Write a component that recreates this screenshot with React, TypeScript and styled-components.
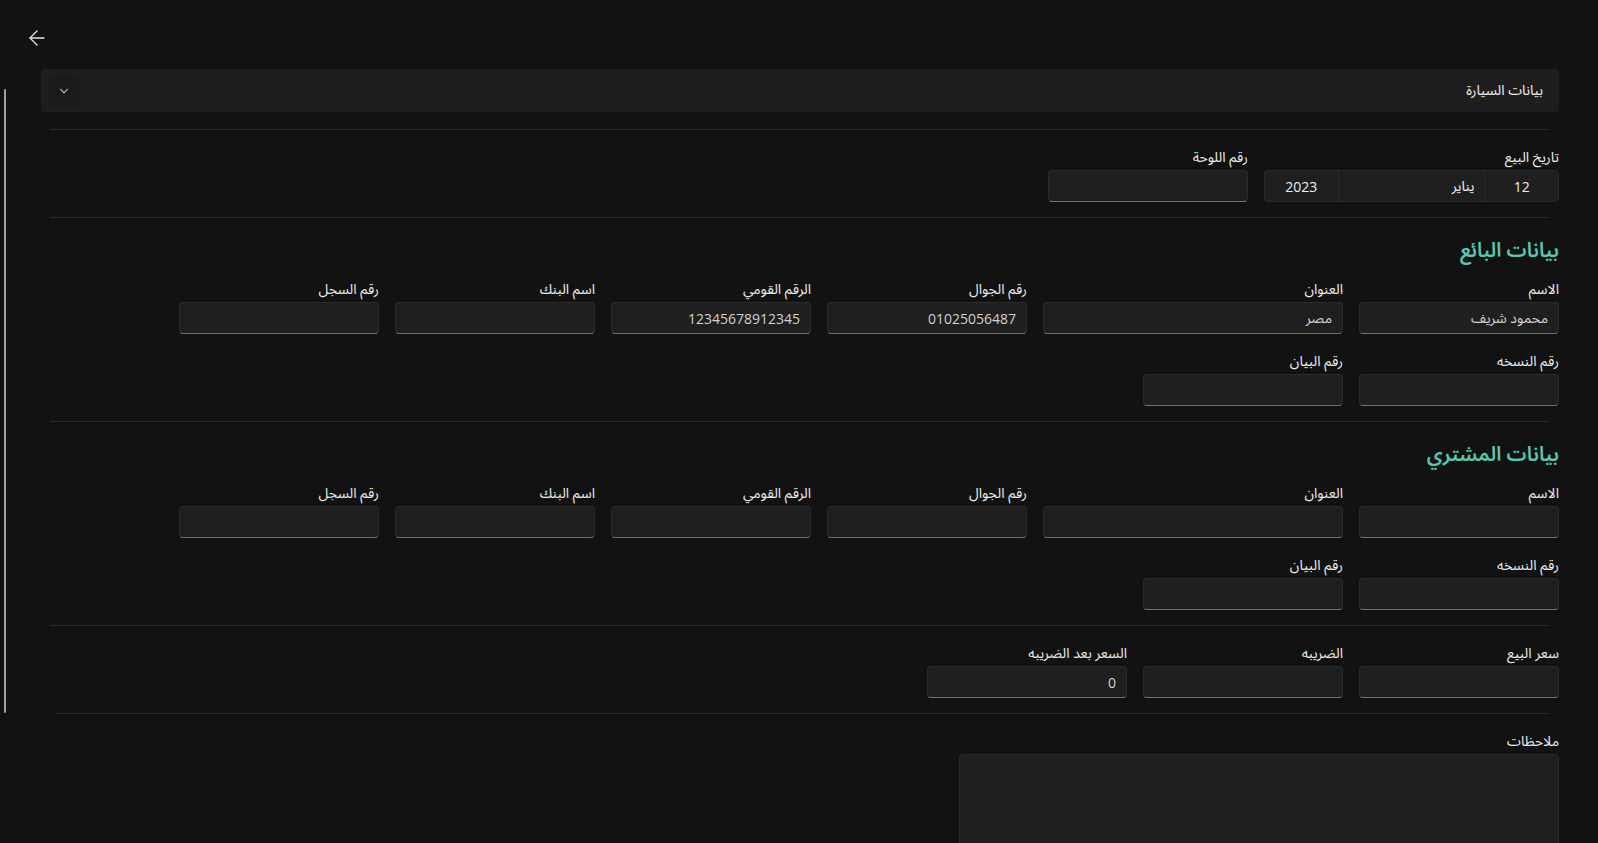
import React from 'react';
import styled, { createGlobalStyle } from 'styled-components';
import { ArrowLeft, ChevronDown } from 'lucide-react';

const GlobalStyle = createGlobalStyle`
  html, body {
    margin: 0;
    padding: 0;
    background: #121212;
  }

  body {
    font-family: "Segoe UI", "Open Sans", "Noto Sans Arabic", "DejaVu Sans", sans-serif;
    color: #ececec;
    font-size: 14px;
    overflow: hidden;
  }

  * {
    box-sizing: border-box;
  }
`;

const Page = styled.div`
  position: relative;
  width: 100%;
  height: 843px;
  overflow: hidden;
  background: #121212;
`;

const Scrollbar = styled.div`
  position: absolute;
  left: 4px;
  top: 89px;
  width: 2px;
  height: 624px;
  border-radius: 1px;
  background: #a0a0a0;
`;

const TopBar = styled.div`
  height: 69px;
  display: flex;
  align-items: center;
  padding: 7px 0 0 23px;
`;

const BackButton = styled.button`
  width: 28px;
  height: 28px;
  display: flex;
  align-items: center;
  justify-content: center;
  padding: 0;
  border: none;
  border-radius: 4px;
  background: transparent;
  color: #e6e6e6;
  cursor: pointer;
`;

const Content = styled.div`
  direction: rtl;
  margin: 0 39px 0 41px;
`;

const AccordionHeader = styled.div`
  height: 43px;
  display: flex;
  align-items: center;
  justify-content: space-between;
  padding: 0 16px 0 8px;
  margin-bottom: 17px;
  border-radius: 4px;
  background: #1e1e1e;
  font-size: 14px;
  color: #f0f0f0;
`;

const ChevronButton = styled.button`
  width: 30px;
  height: 30px;
  display: flex;
  align-items: center;
  justify-content: center;
  padding: 0;
  border: none;
  border-radius: 4px;
  background: #1a1a1a;
  color: #e6e6e6;
`;

const Divider = styled.div<{ $inset?: number }>`
  height: 1px;
  background: #2a2a2a;
  margin-right: 10px;
  margin-left: ${(p) => p.$inset ?? 9}px;
`;

const Section = styled.div`
  padding: 17px 0 15px;
`;

const Heading = styled.h2`
  margin: 0 0 14px;
  font-size: 20px;
  line-height: 30px;
  font-weight: 600;
  color: #5cc6ae;
`;

const FieldRow = styled.div`
  display: flex;
  flex-wrap: wrap;
  gap: 17px 16px;
`;

const Field = styled.div<{ $width: number }>`
  width: ${(p) => p.$width}px;
  display: flex;
  flex-direction: column;
`;

const Label = styled.label`
  height: 20px;
  line-height: 20px;
  margin-bottom: 3px;
  font-size: 14px;
  color: #ececec;
  white-space: nowrap;
`;

const TextInput = styled.input`
  width: 100%;
  height: 32px;
  padding: 0 10px;
  border: 1px solid #2c2c2c;
  border-bottom-color: #727272;
  border-radius: 4px;
  background: #1f1f1f;
  color: #d2d2d2;
  font: inherit;
  font-size: 14px;
  text-align: right;
  outline: none;
`;

const NotesArea = styled.textarea`
  width: 100%;
  height: 130px;
  padding: 6px 10px;
  border: 1px solid #2c2c2c;
  border-radius: 4px;
  background: #1f1f1f;
  color: #d2d2d2;
  font: inherit;
  resize: none;
  outline: none;
`;

const DateGroup = styled.div`
  display: flex;
  height: 32px;
  border: 1px solid #2b2b2b;
  border-radius: 4px;
  background: #1f1f1f;
  overflow: hidden;
`;

const DatePart = styled.div<{ $width: number; $align: 'center' | 'right' }>`
  width: ${(p) => p.$width}px;
  display: flex;
  align-items: center;
  justify-content: ${(p) => (p.$align === 'center' ? 'center' : 'flex-start')};
  padding: 0 10px;
  color: #f0f0f0;
  font-size: 14px;

  & + & {
    border-right: 1px solid #2b2b2b;
  }
`;

interface FieldDef {
  label: string;
  width: number;
  value?: string;
}

const partyFields = (values: string[]): FieldDef[] => [
  { label: 'الاسم', width: 200, value: values[0] },
  { label: 'العنوان', width: 300, value: values[1] },
  { label: 'رقم الجوال', width: 200, value: values[2] },
  { label: 'الرقم القومي', width: 200, value: values[3] },
  { label: 'اسم البنك', width: 200 },
  { label: 'رقم السجل', width: 200 },
  { label: 'رقم النسخه', width: 200 },
  { label: 'رقم البيان', width: 200 }
];

const seller = partyFields(['محمود شريف', 'مصر', '01025056487', '12345678912345']);
const buyer = partyFields([]);

const prices: FieldDef[] = [
  { label: 'سعر البيع', width: 200 },
  { label: 'الضريبه', width: 200 },
  { label: 'السعر بعد الضريبه', width: 200, value: '0' }
];

function Fields ({ items }: { items: FieldDef[] }) {
  return (
    <FieldRow>
      {items.map((f, i) => (
        <Field
          $width={f.width}
          key={i}
        >
          <Label>{f.label}</Label>
          <TextInput
            readOnly
            value={f.value ?? ''}
          />
        </Field>
      ))}
    </FieldRow>
  );
}

export default function App () {
  return (
    <Page>
      <GlobalStyle />
      <Scrollbar />
      <TopBar>
        <BackButton aria-label='back'>
          <ArrowLeft
            size={24}
            strokeWidth={1.3}
          />
        </BackButton>
      </TopBar>
      <Content>
        <AccordionHeader>
          <span>بيانات السيارة</span>
          <ChevronButton aria-label='toggle'>
            <ChevronDown
              size={14}
              strokeWidth={1.8}
            />
          </ChevronButton>
        </AccordionHeader>
        <Divider />
        <Section>
          <FieldRow>
            <Field $width={295}>
              <Label>تاريخ البيع</Label>
              <DateGroup>
                <DatePart
                  $align='center'
                  $width={73}
                >12</DatePart>
                <DatePart
                  $align='right'
                  $width={148}
                >يناير</DatePart>
                <DatePart
                  $align='center'
                  $width={74}
                >2023</DatePart>
              </DateGroup>
            </Field>
            <Field $width={200}>
              <Label>رقم اللوحة</Label>
              <TextInput
                readOnly
                value=''
              />
            </Field>
          </FieldRow>
        </Section>
        <Divider />
        <Section>
          <Heading>بيانات البائع</Heading>
          <Fields items={seller} />
        </Section>
        <Divider />
        <Section>
          <Heading>بيانات المشتري</Heading>
          <Fields items={buyer} />
        </Section>
        <Divider />
        <Section>
          <Fields items={prices} />
        </Section>
        <Divider $inset={15} />
        <Section>
          <Field $width={600}>
            <Label>ملاحظات</Label>
            <NotesArea readOnly />
          </Field>
        </Section>
      </Content>
    </Page>
  );
}
